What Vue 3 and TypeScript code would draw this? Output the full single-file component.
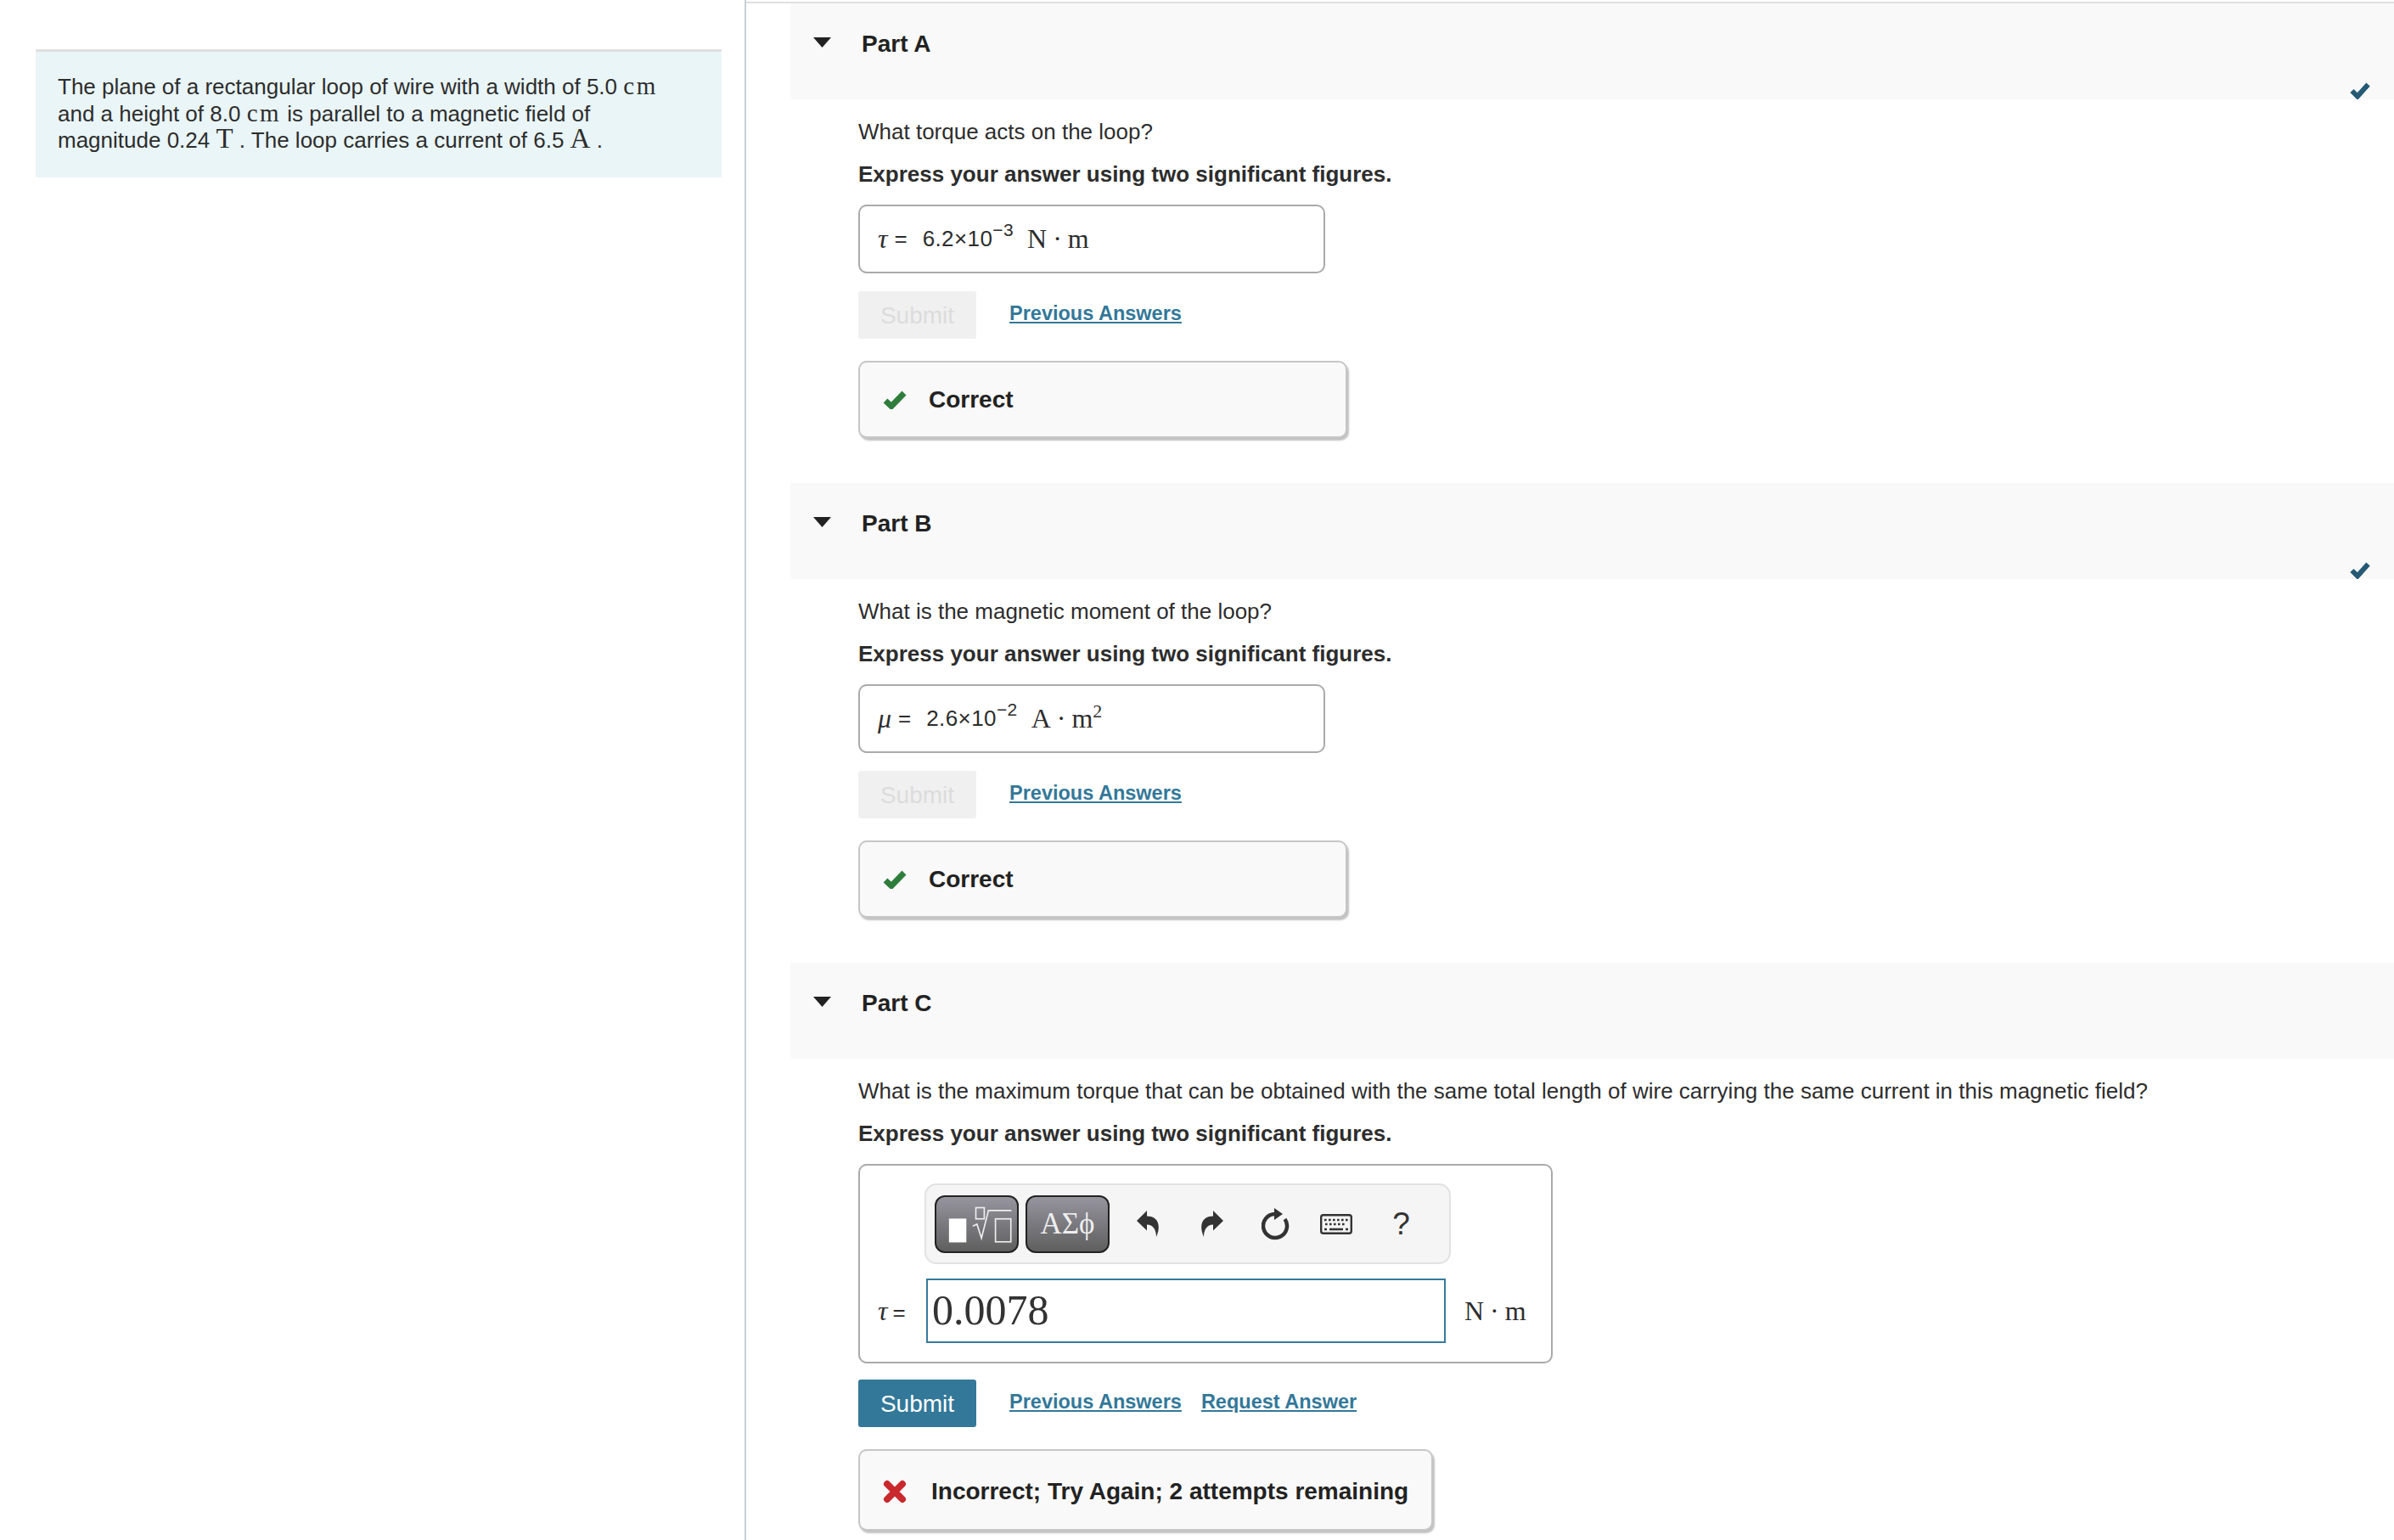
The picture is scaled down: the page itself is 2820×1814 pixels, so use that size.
<template>
  <div class="page">
    <aside class="intro-col">
      <div class="intro">
        The plane of a rectangular loop of wire with a width of 5.0 <span class="m">cm</span>
        and a height of 8.0 <span class="m">cm</span> is parallel to a magnetic field of
        magnitude 0.24 <span class="m big">T</span> . The loop carries a current of 6.5
        <span class="m big">A</span> .
      </div>
    </aside>

    <main class="parts">
      <section v-for="part in parts" :key="part.name" class="part">
        <header class="part-head">
          <svg class="caret" width="21" height="12" viewBox="0 0 21 12"><path d="M0 0H21L10.5 12Z" fill="#222" /></svg>
          <span class="part-name">{{ part.name }}</span>
          <svg v-if="part.done" class="done" width="26" height="21" viewBox="0 0 26 21">
            <path d="M3.5 11L10 17.5L22.5 3.5" fill="none" stroke="#245a73" stroke-width="6" />
          </svg>
        </header>

        <div class="part-body">
          <p class="question">{{ part.question }}</p>
          <p class="hint">Express your answer using two significant figures.</p>

          <div v-if="part.done" class="answer">
            <span class="sym">{{ part.symbol }}</span><span class="eq">=</span>
            <span class="val">{{ part.value }}<sup>{{ part.exp }}</sup></span>
            <span class="unit">{{ part.unitA }}<span class="dot">·</span>{{ part.unitB }}<sup v-if="part.unitExp">{{ part.unitExp }}</sup></span>
          </div>

          <div v-else class="editor">
            <div class="toolbar">
              <div class="tool-btn">
                <svg width="96" height="64" viewBox="20 29 288 192">
                  <rect x="65" y="105" width="62" height="85" fill="#fff" />
                  <rect x="161" y="66" width="30" height="40" fill="none" stroke="#eee" stroke-width="5" />
                  <path d="M150 132L165 125L181 175L206 76H288" fill="none" stroke="#eee" stroke-width="5" />
                  <rect x="231" y="106" width="55" height="82" fill="none" stroke="#eee" stroke-width="5" />
                </svg>
              </div>
              <div class="tool-btn greek">ΑΣϕ</div>
              <span class="tool first">
                <svg width="27" height="31" viewBox="0 0 27 31"><path :d="arrow" fill="#333" /></svg>
              </span>
              <span class="tool">
                <svg width="27" height="31" viewBox="0 0 27 31"><path :d="arrow" fill="#333" transform="translate(27 0) scale(-1 1)" /></svg>
              </span>
              <span class="tool">
                <svg width="34" height="38" viewBox="0 0 34 38">
                  <path d="M16 7A14 14 0 1 0 27.5 13" fill="none" stroke="#333" stroke-width="4.5" />
                  <path d="M15 0L25 7L15 14Z" fill="#333" />
                </svg>
              </span>
              <span class="tool kbd">
                <svg width="38" height="24" viewBox="0 0 38 24">
                  <rect x="1.2" y="1.2" width="35.6" height="21.6" rx="2.5" fill="#f5f5f5" stroke="#333" stroke-width="2.4" />
                  <path d="M5 7H33M6 12H31" stroke="#333" stroke-width="2.6" stroke-dasharray="2.6 2.4" fill="none" />
                  <path d="M5 18H8M11 18H27M30 18H33" stroke="#333" stroke-width="2.4" fill="none" />
                </svg>
              </span>
              <span class="tool help">?</span>
            </div>
            <div class="input-row">
              <span class="sym wide">{{ part.symbol }}<span class="eq">=</span></span>
              <div class="math-input">{{ part.value }}</div>
              <span class="unit">{{ part.unitA }}<span class="dot">·</span>{{ part.unitB }}</span>
            </div>
          </div>

          <div class="actions">
            <button class="submit" :disabled="part.done">Submit</button>
            <a class="link">Previous Answers</a>
            <a v-if="!part.done" class="link">Request Answer</a>
          </div>

          <div class="feedback" :class="{ bad: !part.done }">
            <svg v-if="part.done" width="28" height="22" viewBox="0 0 28 22">
              <path d="M3 12L10 18.5L25 3" fill="none" stroke="#2f7d3c" stroke-width="7" />
            </svg>
            <svg v-else width="28" height="28" viewBox="0 0 28 28">
              <path d="M5 5L23 23M23 5L5 23" fill="none" stroke="#c9282d" stroke-width="8" stroke-linecap="round" />
            </svg>
            <span>{{ part.done ? "Correct" : "Incorrect; Try Again; 2 attempts remaining" }}</span>
          </div>
        </div>
      </section>
    </main>
  </div>
</template>

<script setup lang="ts">
interface Part {
  name: string;
  question: string;
  done: boolean;
  symbol: string;
  value: string;
  exp?: string;
  unitA: string;
  unitB: string;
  unitExp?: string;
}

const arrow = "M0 12L12 0V6.5C23 6.5 30 15 23 31C23 22 19 16.5 12 16.5V23.5Z";

const parts: Part[] = [
  {
    name: "Part A",
    question: "What torque acts on the loop?",
    done: true,
    symbol: "τ",
    value: "6.2×10",
    exp: "−3",
    unitA: "N",
    unitB: "m",
  },
  {
    name: "Part B",
    question: "What is the magnetic moment of the loop?",
    done: true,
    symbol: "μ",
    value: "2.6×10",
    exp: "−2",
    unitA: "A",
    unitB: "m",
    unitExp: "2",
  },
  {
    name: "Part C",
    question:
      "What is the maximum torque that can be obtained with the same total length of wire carrying the same current in this magnetic field?",
    done: false,
    symbol: "τ",
    value: "0.0078",
    unitA: "N",
    unitB: "m",
  },
];
</script>

<style>
html,
body {
  margin: 0;
  background: #fff;
}
</style>

<style scoped>
.page {
  display: flex;
  height: 1814px;
  overflow: hidden;
  font-family: "Liberation Sans", Arial, sans-serif;
  font-size: 26px;
  color: #2d2d2d;
}

.intro-col {
  box-sizing: border-box;
  width: 879px;
  flex: none;
  padding: 58px 27px 0 42px;
  border-right: 2px solid #c6d0d9;
}

.intro {
  background: #e9f5f7;
  border-top: 3px solid #dfdfdf;
  padding: 26px 60px 0 26px;
  line-height: 31.5px;
  height: 122px;
}

.m {
  font-family: "Liberation Serif", serif;
  font-size: 29px;
  letter-spacing: 2.5px;
  line-height: 0;
}

.m.big {
  font-size: 33px;
  letter-spacing: 0;
}

.parts {
  flex: 1;
  min-width: 0;
  margin-top: 2px;
  padding-left: 52px;
  border-top: 2px solid #dfdfdf;
}

.part {
  padding-bottom: 53px;
}

.part-head {
  position: relative;
  display: flex;
  align-items: flex-start;
  box-sizing: border-box;
  height: 113px;
  padding: 31px 0 0 27px;
  background: #f9f9f9;
}

.caret {
  margin-top: 9px;
}

.part-name {
  margin-left: 36px;
  font-weight: 700;
  font-size: 28px;
  line-height: 33px;
  color: #222;
}

.done {
  position: absolute;
  right: 27px;
  bottom: 0;
}

.part-body {
  padding-left: 80px;
}

.question,
.hint {
  margin: 0;
  line-height: 34px;
}

.question {
  margin-top: 21px;
}

.hint {
  margin-top: 16px;
  font-weight: 700;
}

.answer {
  display: flex;
  align-items: center;
  box-sizing: border-box;
  width: 550px;
  height: 81px;
  margin-top: 19px;
  padding-left: 21px;
  border: 2px solid #aaa;
  border-radius: 10px;
}

.sym {
  font-family: "Liberation Serif", serif;
  font-style: italic;
  font-size: 32px;
}

.eq {
  margin: 0 18px 0 8px;
  font-family: "Liberation Sans", sans-serif;
  font-style: normal;
  font-size: 26px;
}

.val {
  font-size: 26px;
  letter-spacing: 0.4px;
}

sup {
  font-size: 21px;
  line-height: 0;
  vertical-align: 12px;
}

.unit {
  margin-left: 16px;
  font-family: "Liberation Serif", serif;
  font-size: 32px;
}

.dot {
  margin: 0 7px;
}

.unit sup {
  font-size: 22px;
}

.editor {
  box-sizing: border-box;
  width: 818px;
  height: 235px;
  margin-top: 19px;
  padding: 21px 0 0 21px;
  border: 2px solid #aaa;
  border-radius: 10px;
}

.toolbar {
  display: flex;
  align-items: center;
  box-sizing: border-box;
  width: 620px;
  height: 95px;
  margin-left: 55px;
  padding-left: 10px;
  gap: 8px;
  background: #f5f5f5;
  border: 2px solid #e2e2e2;
  border-radius: 14px;
}

.tool-btn {
  display: flex;
  align-items: center;
  justify-content: center;
  box-sizing: border-box;
  width: 99px;
  height: 68px;
  border: 2px solid #222;
  border-radius: 12px;
  background: linear-gradient(#96949e, #5f5f5f);
}

.greek {
  font-family: "Liberation Serif", serif;
  font-size: 35px;
  color: #eee;
}

.tool {
  display: flex;
  justify-content: center;
  width: 67px;
}

.first {
  margin-left: 4px;
}

.kbd {
  margin-left: -4px;
}

.help {
  margin-left: 2px;
  font-size: 37px;
  color: #333;
}

.input-row {
  display: flex;
  align-items: center;
  margin-top: 17px;
}

.wide {
  width: 57px;
  flex: none;
}

.wide .eq {
  margin: 0 0 0 6px;
}

.math-input {
  box-sizing: border-box;
  width: 612px;
  height: 76px;
  padding-left: 5px;
  border: 2px solid #357a9d;
  font-family: "Liberation Serif", serif;
  font-size: 50px;
  line-height: 70px;
  color: #333;
}

.input-row .unit {
  margin-left: 22px;
}

.actions {
  display: flex;
  align-items: flex-start;
  margin-top: 21px;
}

.part:last-child .actions {
  margin-top: 19px;
}

.submit {
  width: 139px;
  height: 56px;
  margin-right: 39px;
  padding-top: 3px;
  border: none;
  border-radius: 3px;
  background: #337899;
  color: #fff;
  font-family: inherit;
  font-size: 28px;
}

.submit:disabled {
  background: #f0f0f0;
  color: #dcdcdc;
}

.link {
  margin-right: 23px;
  margin-top: 11px;
  font-size: 23.5px;
  font-weight: 700;
  line-height: 30px;
  color: #337899;
  text-decoration: underline;
}

.feedback {
  display: flex;
  align-items: center;
  gap: 26px;
  box-sizing: border-box;
  width: 576px;
  height: 91px;
  margin-top: 26px;
  padding-left: 27px;
  border: 2px solid #c6c6c6;
  border-radius: 10px;
  background: #f9f9f9;
  box-shadow: 2px 3px 2px #c2c2c2;
  font-size: 28px;
  font-weight: 700;
  color: #222;
}

.feedback.bad {
  width: 677px;
  height: 96px;
  padding-top: 4px;
  gap: 29px;
}
</style>
